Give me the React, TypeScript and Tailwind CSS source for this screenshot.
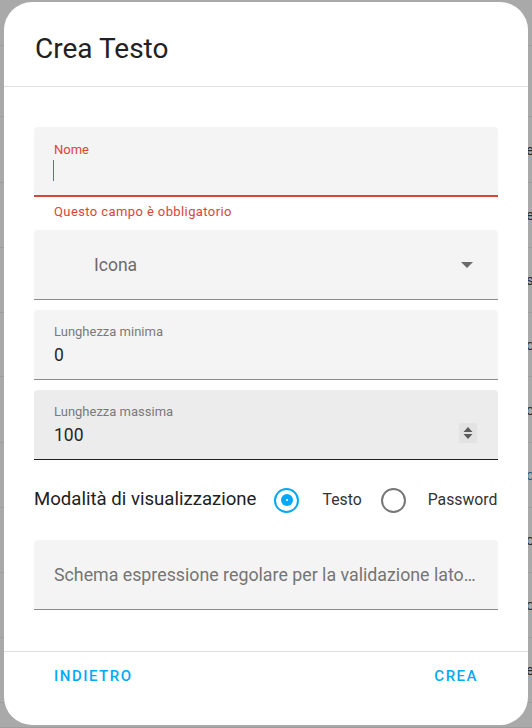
import React from "react";

const rows = [46, 71, 66, 65, 65, 64, 66, 65, 65, 65, 65, 25];
const edgeText: Record<number, string> = { 2: "e", 3: "e", 4: "s", 5: "c", 6: "c", 7: "o", 8: "c", 9: "c", 10: "e" };

function Field({
  label,
  value,
  hover,
  dark,
  children,
}: {
  label: string;
  value: string;
  hover?: boolean;
  dark?: boolean;
  children?: React.ReactNode;
}) {
  return (
    <div
      className={`relative h-[70px] rounded-t-[4px] border-b px-[20px] ${
        hover ? "bg-[#ececec]" : "bg-[#f4f4f4]"
      } ${dark ? "border-[#1f1f1f]" : "border-[#8c8c8c]"}`}
    >
      <div className="pt-[14px] text-[13px] leading-[16px] text-[#7a7a7a]">{label}</div>
      <div className="mt-[3px] text-[17.5px] leading-[24px] text-[#262626]">{value}</div>
      {children}
    </div>
  );
}

export default function App() {
  return (
    <div
      className="relative h-[728px] w-[532px] overflow-hidden bg-[#a9a9a9]"
      style={{ fontFamily: "Roboto, 'Liberation Sans', sans-serif" }}
    >
      {/* list behind the scrim */}
      <div className="flex flex-col">
        {rows.map((h, i) => (
          <div
            key={i}
            className="relative border-b border-[#9d9d9d]"
            style={{ height: h }}
          >
            {edgeText[i] && (
              <span
                className={`absolute left-[526px] top-1/2 -translate-y-1/2 text-[15px] ${
                  i === 7 ? "text-[#2a5f8a]" : "text-[#2b2b2b]"
                }`}
              >
                {edgeText[i]}
              </span>
            )}
          </div>
        ))}
      </div>

      {/* dialog */}
      <div className="absolute left-[4px] top-[2px] flex h-[723px] w-[524px] flex-col rounded-[28px] bg-white">
        <div className="h-[85px] border-b border-[#e0e0e0] pl-[31px] pt-[31px]">
          <h1 className="text-[28px] leading-[32px] text-[#212121]">Crea Testo</h1>
        </div>

        <div className="flex-1 px-[30px] pt-[40px]">
          {/* Nome */}
          <div className="relative h-[70px] rounded-t-[4px] border-b-2 border-[#db4437] bg-[#f4f4f4] px-[20px]">
            <div className="pt-[15px] text-[13px] leading-[16px] text-[#db4437]">Nome</div>
            <div className="ml-[-1px] mt-[2px] h-[21px] w-[1px] bg-[#db4437]" />
          </div>
          <div className="h-[33px] px-[20px] pt-[7px] text-[13px] leading-[16px] tracking-[0.4px] text-[#db4437]">
            Questo campo è obbligatorio
          </div>

          {/* Icona */}
          <div className="flex h-[70px] items-center rounded-t-[4px] border-b border-[#8c8c8c] bg-[#f4f4f4] pl-[60px] pr-[25px]">
            <span className="flex-1 pt-[2px] text-[17.5px] text-[#6b6b6b]">Icona</span>
            <svg width="12" height="6" viewBox="0 0 12 6">
              <path d="M0 0h12L6 6z" fill="#6b6b6b" />
            </svg>
          </div>

          <div className="h-[10px]" />
          <Field label="Lunghezza minima" value="0" />
          <div className="h-[10px]" />
          <Field label="Lunghezza massima" value="100" hover dark>
            <div className="absolute right-[21px] top-[33px] flex h-[20px] w-[18px] items-center justify-center bg-[#e3e3e3]">
              <svg width="10" height="14" viewBox="0 0 10 14">
                <path d="M5 1L9.5 6h-9z M5 13L9.5 8h-9z" fill="#5c5c5c" />
              </svg>
            </div>
          </Field>

          {/* Modalità */}
          <div className="flex h-[80px] items-center whitespace-nowrap">
            <span className="shrink-0 text-[18.6px] text-[#212121]">Modalità di visualizzazione</span>
            <div className="ml-[18px] flex h-[25px] w-[25px] shrink-0 items-center justify-center rounded-full border-[2.5px] border-[#03a9f4]">
              <div className="flex h-[12px] w-[12px] items-center justify-center rounded-full bg-[#03a9f4]">
                <div className="h-[2px] w-[2px] rounded-full bg-white" />
              </div>
            </div>
            <span className="ml-[23px] shrink-0 text-[15.8px] text-[#333]">Testo</span>
            <div className="ml-[19px] h-[25px] w-[25px] shrink-0 rounded-full border-[2.5px] border-[#777]" />
            <span className="ml-[22px] shrink-0 text-[15.8px] text-[#333]">Password</span>
          </div>

          {/* Schema */}
          <div className="flex h-[70px] items-center rounded-t-[4px] border-b border-[#8c8c8c] bg-[#f4f4f4] px-[20px]">
            <span className="truncate pt-[1px] text-[17.8px] text-[#757575]">
              Schema espressione regolare per la validazione lato client
            </span>
          </div>
        </div>

        <div className="flex h-[74px] items-start justify-between border-t border-[#e0e0e0] px-[50px] pt-[13px]">
          <button className="text-[15px] font-medium tracking-[1.5px] text-[#03a9f4]">INDIETRO</button>
          <button className="text-[15px] font-medium tracking-[1.5px] text-[#03a9f4]">CREA</button>
        </div>
      </div>
    </div>
  );
}
